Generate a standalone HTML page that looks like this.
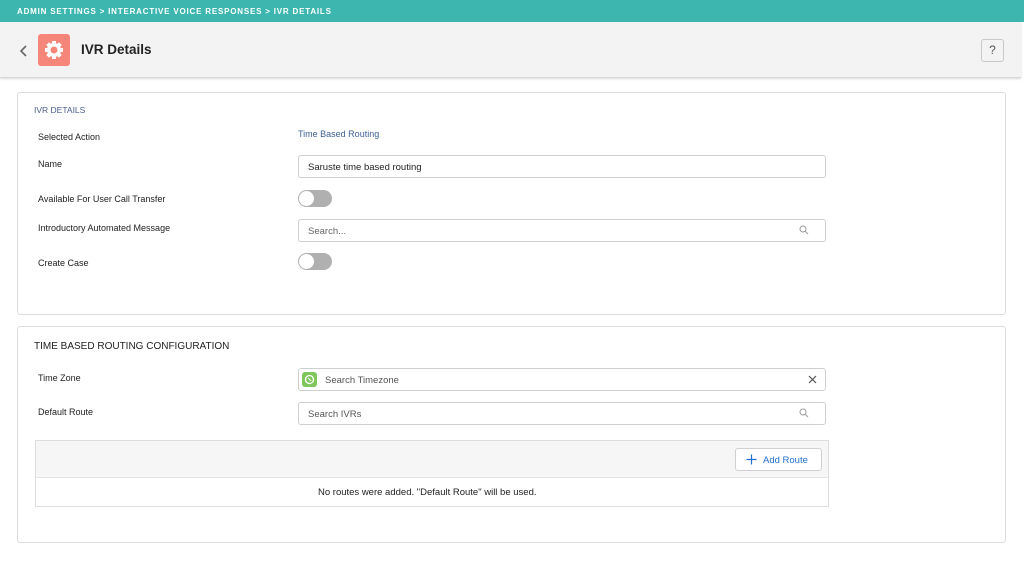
<!DOCTYPE html>
<html><head><meta charset="utf-8"><style>
*{box-sizing:border-box;margin:0;padding:0}
body{width:1024px;height:567px;background:#fff;font-family:"Liberation Sans",sans-serif;position:relative;overflow:hidden;color:#222}
.a{position:absolute}
.top{left:0;top:0;width:1024px;height:22px;background:#3cb6ae;color:#fff;font-size:8px;letter-spacing:.8px;font-weight:bold;padding:7px 0 0 17px}
.hdr{left:0;top:22px;width:1021px;height:56px;background:#f3f3f3;border-bottom:1px solid #d8d8d8;box-shadow:0 1px 2px rgba(0,0,0,.15)}
.card{border:1px solid #dcdcdc;border-radius:3px;background:#fff}
.lbl{font-size:9px;color:#222}
.inp{border:1px solid #cfcfcf;border-radius:3px;height:23px;font-size:9.5px;padding:6px 9px;background:#fff}
.tog{width:34px;height:17px;border-radius:9px;background:#b0b0b0}
.tog:after{content:"";position:absolute;left:1px;top:1px;width:15px;height:15px;border-radius:50%;background:#fff}
</style></head><body>
<div class="a top">ADMIN SETTINGS &gt; INTERACTIVE VOICE RESPONSES &gt; IVR DETAILS</div>
<div class="a hdr"></div>
<svg class="a" style="left:19px;top:44px" width="10" height="14" viewBox="0 0 10 14"><path d="M7 2L2 7l5 5" stroke="#666" stroke-width="1.6" fill="none"/></svg>
<div class="a" style="left:38px;top:34px;width:32px;height:32px;background:#f6857a;border-radius:3px"></div>
<svg class="a" style="left:42px;top:38px" width="24" height="24" viewBox="0 0 24 24"><g fill="#fff"><circle cx="12" cy="12" r="7"/><rect x="10" y="3" width="4" height="18"/><rect x="3" y="10" width="18" height="4"/><rect x="10" y="3" width="4" height="18" transform="rotate(45 12 12)"/><rect x="10" y="3" width="4" height="18" transform="rotate(-45 12 12)"/></g><circle cx="12" cy="12" r="3.5" fill="#f6857a"/></svg>
<div class="a" style="left:81px;top:42px;font-size:13.5px;font-weight:bold;color:#222">IVR Details</div>
<div class="a" style="left:981px;top:39px;width:23px;height:23px;border:1px solid #c8c8c8;border-radius:3px;font-size:12px;color:#555;text-align:center;line-height:21px">?</div>

<div class="a card" style="left:17px;top:92px;width:989px;height:223px"></div>
<div class="a" style="left:34px;top:105px;font-size:8.5px;color:#4a5d8c">IVR DETAILS</div>
<div class="a lbl" style="left:38px;top:132px">Selected Action</div>
<div class="a" style="left:298px;top:129px;font-size:9px;color:#3e5f95">Time Based Routing</div>
<div class="a lbl" style="left:38px;top:159px">Name</div>
<div class="a inp" style="left:298px;top:155px;width:528px;color:#222">Saruste time based routing</div>
<div class="a lbl" style="left:38px;top:194px">Available For User Call Transfer</div>
<div class="a tog" style="left:298px;top:190px"></div>
<div class="a lbl" style="left:38px;top:223px">Introductory Automated Message</div>
<div class="a inp" style="left:298px;top:219px;width:528px;color:#666">Search...</div>
<svg class="a" style="left:799px;top:225px" width="10" height="10" viewBox="0 0 10 10"><circle cx="4" cy="4" r="3" stroke="#999" fill="none"/><path d="M6.3 6.3L9 9" stroke="#999"/></svg>
<div class="a lbl" style="left:38px;top:258px">Create Case</div>
<div class="a tog" style="left:298px;top:253px"></div>

<div class="a card" style="left:17px;top:326px;width:989px;height:217px"></div>
<div class="a" style="left:34px;top:341px;font-size:10px;color:#222">TIME BASED ROUTING CONFIGURATION</div>
<div class="a lbl" style="left:38px;top:373px">Time Zone</div>
<div class="a inp" style="left:298px;top:368px;width:528px;color:#555;padding-left:26px">Search Timezone</div>
<div class="a" style="left:302px;top:372px;width:15px;height:15px;background:#7fc75d;border-radius:3px"></div>
<svg class="a" style="left:304px;top:374px" width="11" height="11" viewBox="0 0 11 11"><circle cx="5.5" cy="5.5" r="4" stroke="#fff" stroke-width="1.3" fill="none"/><path d="M4 4l3 3" stroke="#fff"/></svg>
<svg class="a" style="left:808px;top:375px" width="9" height="9" viewBox="0 0 9 9"><path d="M1 1l7 7M8 1L1 8" stroke="#555" stroke-width="1.2"/></svg>
<div class="a lbl" style="left:38px;top:407px">Default Route</div>
<div class="a inp" style="left:298px;top:402px;width:528px;color:#555">Search IVRs</div>
<svg class="a" style="left:799px;top:408px" width="10" height="10" viewBox="0 0 10 10"><circle cx="4" cy="4" r="3" stroke="#999" fill="none"/><path d="M6.3 6.3L9 9" stroke="#999"/></svg>
<div class="a" style="left:35px;top:440px;width:794px;height:67px;border:1px solid #ddd;background:#fff"></div>
<div class="a" style="left:36px;top:441px;width:792px;height:37px;background:#f6f6f6;border-bottom:1px solid #e4e4e4"></div>
<div class="a" style="left:735px;top:448px;width:87px;height:23px;border:1px solid #d0d0d0;border-radius:3px;background:#fff;font-size:9.5px;color:#1f6fd0;padding:6px 0 0 27px">Add Route</div>
<svg class="a" style="left:746px;top:454px" width="11" height="11" viewBox="0 0 11 11"><path d="M5.5 0.5v10M0.5 5.5h10" stroke="#1f6fd0" stroke-width="1.2"/></svg>
<div class="a" style="left:318px;top:487px;font-size:9.5px;color:#222">No routes were added. "Default Route" will be used.</div>
</body></html>
